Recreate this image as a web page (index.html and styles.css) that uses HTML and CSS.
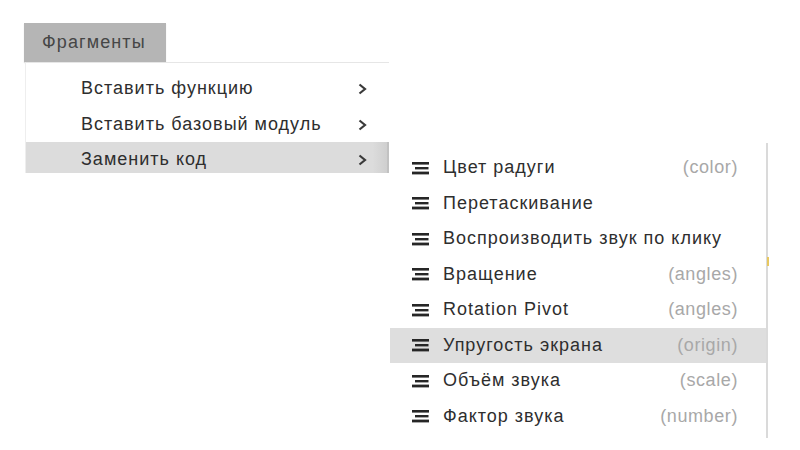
FILE: index.html
```html
<!DOCTYPE html>
<html lang="ru">
<head>
<meta charset="utf-8">
<link rel="stylesheet" href="styles.css">
</head>
<body>
<div class="page">
  <div class="toolbar">
    <button class="btn">Фрагменты</button>
  </div>
  <div class="menu">
    <div class="menu-item"><span class="label">Вставить функцию</span><svg class="chev" viewBox="0 0 9 12" width="9" height="12"><path d="M1.5 1.5 L7 6 L1.5 10.5" fill="none" stroke="#3a3a3a" stroke-width="2.2"/></svg></div>
    <div class="menu-item"><span class="label">Вставить базовый модуль</span><svg class="chev" viewBox="0 0 9 12" width="9" height="12"><path d="M1.5 1.5 L7 6 L1.5 10.5" fill="none" stroke="#3a3a3a" stroke-width="2.2"/></svg></div>
    <div class="menu-item active"><span class="label">Заменить код</span><svg class="chev" viewBox="0 0 9 12" width="9" height="12"><path d="M1.5 1.5 L7 6 L1.5 10.5" fill="none" stroke="#3a3a3a" stroke-width="2.2"/></svg></div>
    <span class="blue-mark"></span>
  </div>
  <div class="submenu">
    <div class="sub-item"><svg class="ico" viewBox="0 0 18 14" width="18" height="14"><rect x="0" y="1" width="17" height="2.6" fill="#262626"/><rect x="3" y="6" width="13.5" height="2.4" fill="#262626"/><rect x="0" y="10.6" width="17" height="2.8" fill="#262626"/></svg><span class="name">Цвет радуги</span><span class="type">(color)</span></div>
    <div class="sub-item"><svg class="ico" viewBox="0 0 18 14" width="18" height="14"><rect x="0" y="1" width="17" height="2.6" fill="#262626"/><rect x="3" y="6" width="13.5" height="2.4" fill="#262626"/><rect x="0" y="10.6" width="17" height="2.8" fill="#262626"/></svg><span class="name">Перетаскивание</span></div>
    <div class="sub-item"><svg class="ico" viewBox="0 0 18 14" width="18" height="14"><rect x="0" y="1" width="17" height="2.6" fill="#262626"/><rect x="3" y="6" width="13.5" height="2.4" fill="#262626"/><rect x="0" y="10.6" width="17" height="2.8" fill="#262626"/></svg><span class="name">Воспроизводить звук по клику</span></div>
    <div class="sub-item"><svg class="ico" viewBox="0 0 18 14" width="18" height="14"><rect x="0" y="1" width="17" height="2.6" fill="#262626"/><rect x="3" y="6" width="13.5" height="2.4" fill="#262626"/><rect x="0" y="10.6" width="17" height="2.8" fill="#262626"/></svg><span class="name">Вращение</span><span class="type">(angles)</span></div>
    <div class="sub-item"><svg class="ico" viewBox="0 0 18 14" width="18" height="14"><rect x="0" y="1" width="17" height="2.6" fill="#262626"/><rect x="3" y="6" width="13.5" height="2.4" fill="#262626"/><rect x="0" y="10.6" width="17" height="2.8" fill="#262626"/></svg><span class="name">Rotation Pivot</span><span class="type">(angles)</span></div>
    <div class="sub-item active"><svg class="ico" viewBox="0 0 18 14" width="18" height="14"><rect x="0" y="1" width="17" height="2.6" fill="#262626"/><rect x="3" y="6" width="13.5" height="2.4" fill="#262626"/><rect x="0" y="10.6" width="17" height="2.8" fill="#262626"/></svg><span class="name">Упругость экрана</span><span class="type">(origin)</span></div>
    <div class="sub-item"><svg class="ico" viewBox="0 0 18 14" width="18" height="14"><rect x="0" y="1" width="17" height="2.6" fill="#262626"/><rect x="3" y="6" width="13.5" height="2.4" fill="#262626"/><rect x="0" y="10.6" width="17" height="2.8" fill="#262626"/></svg><span class="name">Объём звука</span><span class="type">(scale)</span></div>
    <div class="sub-item"><svg class="ico" viewBox="0 0 18 14" width="18" height="14"><rect x="0" y="1" width="17" height="2.6" fill="#262626"/><rect x="3" y="6" width="13.5" height="2.4" fill="#262626"/><rect x="0" y="10.6" width="17" height="2.8" fill="#262626"/></svg><span class="name">Фактор звука</span><span class="type">(number)</span></div>
    <span class="yellow-mark"></span>
  </div>
</div>
</body>
</html>
```

FILE: styles.css
```css
html, body {
  margin: 0;
  padding: 0;
  background: #ffffff;
}
body {
  font-family: "Liberation Sans", Arial, sans-serif;
  color: #333;
}
.page {
  position: relative;
  width: 800px;
  height: 450px;
  overflow: hidden;
}
.toolbar {
  padding: 23px 0 0 24px;
}
.btn {
  display: block;
  width: 142px;
  height: 39px;
  margin: 0;
  padding: 0 0 0 18px;
  border: none;
  background: #b5b5b5;
  color: #464646;
  font-family: "Liberation Sans", Arial, sans-serif;
  font-size: 18px;
  letter-spacing: 1.1px;
  text-align: left;
  box-shadow: 0 1px 1px rgba(0,0,0,0.12);
}
.menu {
  position: absolute;
  left: 25px;
  top: 62px;
  width: 364px;
  height: 111px;
  overflow: hidden;
  background: #fff;
  border-top: 1px solid #e6e6e6;
  border-left: 1px solid #eeeeee;
  padding-top: 8px;
  box-sizing: border-box;
}
.menu-item {
  display: flex;
  align-items: center;
  height: 35.5px;
  padding: 0 22px 0 55px;
  font-size: 18px;
  letter-spacing: 1px;
  color: #2e2e2e;
}
.menu-item .label {
  flex: 1;
  white-space: nowrap;
}
.menu-item.active {
  background: linear-gradient(to right, #dcdcdc 0%, #dcdcdc 96%, #cfcfcf 100%);
  border-right: 2px solid #c2c2c2;
  padding-right: 20px;
}
.chev {
  display: block;
  margin-top: 1px;
}
.blue-mark {
  position: absolute;
  left: -1px;
  top: 44px;
  width: 1px;
  height: 7px;
  background: #c8d0f0;
}
.submenu {
  position: absolute;
  left: 390px;
  top: 143px;
  width: 378px;
  height: 295px;
  background: #fff;
  border-right: 2px solid #dadada;
  box-sizing: border-box;
  padding-top: 7px;
}
.sub-item {
  display: flex;
  align-items: center;
  height: 35.5px;
  padding: 0 28px 0 22px;
  font-size: 18px;
  letter-spacing: 1px;
  color: #2e2e2e;
}
.sub-item.active {
  background: #dedede;
}
.ico {
  display: block;
  flex: none;
  margin-right: 13px;
}
.sub-item .name {
  flex: 1;
  white-space: nowrap;
}
.sub-item .type {
  color: #a8a8a8;
  letter-spacing: 0.6px;
}
.yellow-mark {
  position: absolute;
  right: -3px;
  top: 114px;
  width: 2px;
  height: 9px;
  background: #e8c860;
}
```
